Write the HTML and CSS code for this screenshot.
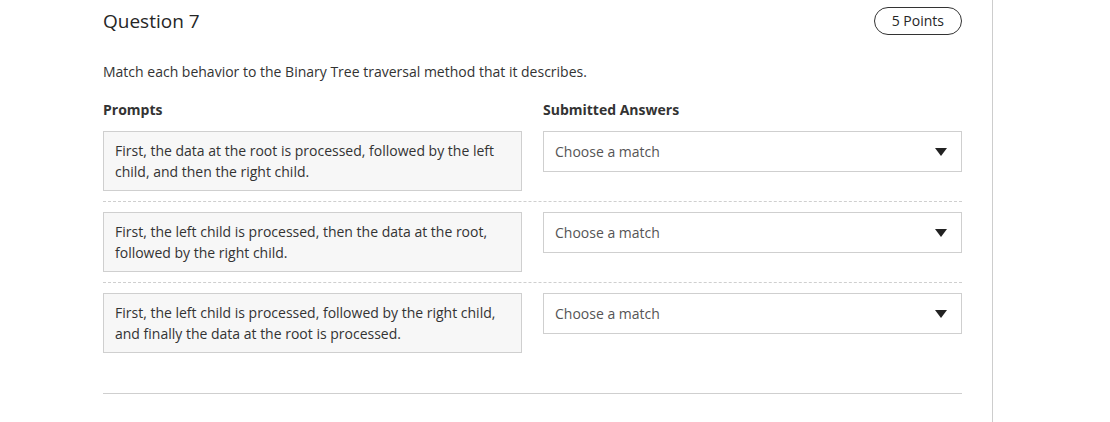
FILE: index.html
```html
<!DOCTYPE html>
<html lang="en">
<head>
  <meta charset="UTF-8" />
  <title>Question 7</title>
  <link rel="stylesheet" href="styles.css">
</head>
<body>
  <div class="page">
    <div class="question">
      <div class="question-head">
        <h2>Question 7</h2>
        <span class="points">5 Points</span>
      </div>
      <p class="instructions">Match each behavior to the Binary Tree traversal method that it describes.</p>

      <div class="match-head">
        <div>Prompts</div>
        <div>Submitted Answers</div>
      </div>

      <div class="matches">
        <div class="match-row">
          <div class="prompt">First, the data at the root is processed, followed by the left child, and then the right child.</div>
          <div class="answer">
            <span>Choose a match</span>
            <span class="caret"></span>
          </div>
        </div>
        <div class="match-row">
          <div class="prompt">First, the left child is processed, then the data at the root, followed by the right child.</div>
          <div class="answer">
            <span>Choose a match</span>
            <span class="caret"></span>
          </div>
        </div>
        <div class="match-row">
          <div class="prompt">First, the left child is processed, followed by the right child, and finally the data at the root is processed.</div>
          <div class="answer">
            <span>Choose a match</span>
            <span class="caret"></span>
          </div>
        </div>
      </div>

      <div class="question-foot"></div>
    </div>
  </div>
</body>
</html>
```

FILE: styles.css
```css
body {
  margin: 0;
  background: #fff;
  color: #333;
  font-family: "Open Sans", Arial, sans-serif;
}
.page {
  display: flex;
  height: 422px;
}
.question {
  width: 859px;
  padding: 7px 30px 0 103px;
  border-right: 1px solid #cdcdcd;
}
.question-head {
  display: flex;
  justify-content: space-between;
  align-items: center;
}
.question-head h2 {
  margin: 0;
  font-size: 19px;
  font-weight: 400;
  color: #262626;
}
.points {
  border: 1px solid #333;
  border-radius: 15px;
  height: 26px;
  line-height: 26px;
  padding: 0 17px;
  font-size: 14px;
  color: #262626;
}
.instructions {
  margin: 27px 0 0;
  font-size: 14px;
  line-height: 20px;
}
.match-head {
  display: grid;
  grid-template-columns: 419px 419px;
  column-gap: 21px;
  margin: 18px 0 1px;
  font-size: 14px;
  font-weight: 700;
  line-height: 20px;
}
.match-row {
  display: grid;
  grid-template-columns: 419px 419px;
  column-gap: 21px;
  align-items: start;
  padding: 10px 0;
  border-bottom: 1px dashed #cfcfcf;
}
.match-row:last-child {
  border-bottom: none;
}
.prompt {
  background: #f7f7f7;
  border: 1px solid #cfcfcf;
  padding: 8px 11px;
  font-size: 14px;
  line-height: 21px;
}
.answer {
  display: flex;
  justify-content: space-between;
  align-items: center;
  height: 39px;
  border: 1px solid #cfcfcf;
  padding: 0 14px 0 11px;
  font-size: 14px;
  color: #555;
}
.caret {
  width: 0;
  height: 0;
  border-left: 6px solid transparent;
  border-right: 6px solid transparent;
  border-top: 8px solid #222;
}
.question-foot {
  margin-top: 30px;
  border-top: 1px solid #cfcfcf;
}
```
